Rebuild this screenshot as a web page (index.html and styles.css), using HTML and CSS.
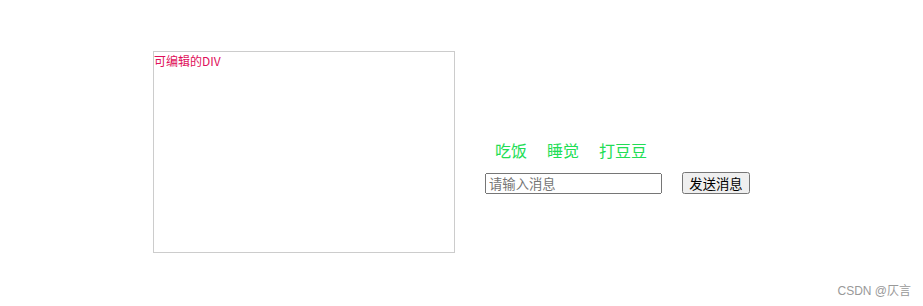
FILE: index.html
```html
<!DOCTYPE html>
<html>

<head>
  <title>可编辑的DIV</title>
  <link rel="stylesheet" href="styles.css">
</head>

<body>
  <div class="page">
    <div class="editor" contenteditable="true">可编辑的DIV</div>

    <div class="chat">
      <ul class="quick">
        <li>吃饭</li>
        <li>睡觉</li>
        <li>打豆豆</li>
      </ul>
      <form class="send" action="">
        <input class="msg-input" placeholder="请输入消息" autocomplete="off" />
        <button class="msg-btn" type="button">发送消息</button>
      </form>
    </div>
  </div>

  <div class="mark">CSDN @仄言</div>
</body>

</html>
```

FILE: styles.css
```css
body {
  margin: 0;
  font-family: "Noto Sans CJK SC", "Liberation Sans", sans-serif;
  background: #fff;
}

.page {
  display: flex;
  align-items: flex-start;
  padding: 51px 0 0 153px;
}

.editor {
  width: 300px;
  height: 200px;
  border: 1px solid #ccc;
  color: #e0105a;
  font-size: 12px;
  line-height: 17px;
  outline: none;
}

.chat {
  margin-left: 30px;
  padding-top: 89px;
}

.quick {
  list-style: none;
  margin: 0;
  padding: 0;
  display: flex;
  font-size: 16px;
  line-height: 20px;
  color: #22dd55;
}

.quick>li {
  margin: 0 10px;
}

.send {
  display: flex;
  align-items: center;
  margin-top: 12px;
}

.msg-input {
  box-sizing: border-box;
  width: 177px;
  height: 21px;
  margin: 0;
  padding: 1px 2px;
  font-family: inherit;
  font-size: 13.33px;
}

.msg-btn {
  box-sizing: border-box;
  width: 68px;
  height: 22px;
  margin: 0 0 0 20px;
  padding: 0;
  font-family: inherit;
  font-size: 13.33px;
}

.mark {
  position: absolute;
  right: 12px;
  bottom: 8px;
  font-size: 12px;
  color: #999;
  font-family: "Liberation Sans", "Noto Sans CJK SC", sans-serif;
}
```
